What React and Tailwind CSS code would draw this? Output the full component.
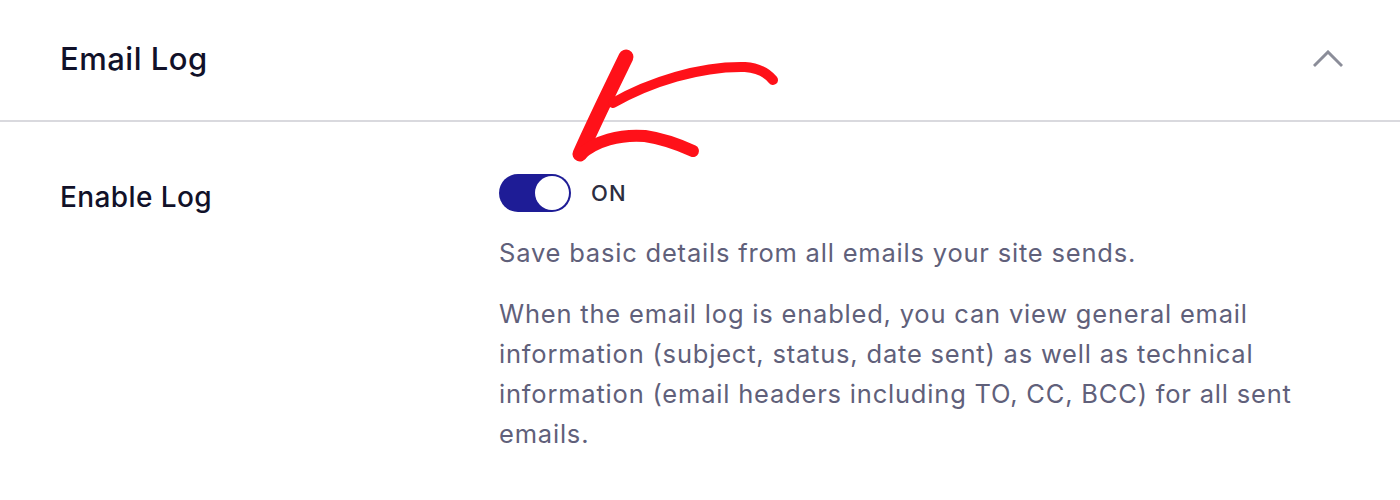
import React from "react";

function ChevronUp() {
  return (
    <svg width="30" height="18" viewBox="0 0 30 18" fill="none">
      <polyline
        points="2,15 15,2 28,15"
        stroke="#8b8d99"
        strokeWidth="3"
        strokeLinecap="square"
        strokeLinejoin="miter"
      />
    </svg>
  );
}

function Toggle() {
  return (
    <div className="flex h-[38px] w-[72px] items-center justify-end rounded-full bg-[#1e1c96] p-[2px]">
      <div className="h-[34px] w-[34px] rounded-full bg-white" />
    </div>
  );
}

function PointerArrow() {
  return (
    <svg
      className="pointer-events-none absolute left-0 top-0"
      width="1400"
      height="500"
      viewBox="0 0 1400 500"
      fill="none"
    >
      <g stroke="#ff1119" strokeLinecap="round" strokeLinejoin="round">
        <path d="M626 57 C612 86 597 116 580 154" strokeWidth="15" />
        <path d="M613 103 C650 82 700 66 745 67 C760 68 768 74 773 80" strokeWidth="10" />
        <path d="M580 155 C595 141 620 134 645 136 C665 139 680 145 693 151" strokeWidth="12" />
      </g>
    </svg>
  );
}

export default function App() {
  return (
    <div
      className="relative h-[500px] w-[1400px] overflow-hidden bg-white"
      style={{ fontFamily: "Inter, 'Noto Sans', sans-serif" }}
    >
      <div className="flex h-[122px] items-center justify-between border-b-2 border-[#d9d9de] pl-[60px] pr-[57px] pb-[2px]">
        <h2 className="text-[31px] font-medium tracking-[0.5px] text-[#111129]">Email Log</h2>
        <ChevronUp />
      </div>

      <div className="grid grid-cols-[439px_1fr] pl-[60px] pt-[52px]">
        <div className="pt-[4px] text-[28px] font-medium leading-[38px] tracking-[0.4px] text-[#111129]">
          Enable Log
        </div>
        <div className="w-[810px]">
          <div className="flex items-center gap-[20px]">
            <Toggle />
            <span className="text-[22px] font-medium tracking-[1.2px] text-[#2c2d40]">ON</span>
          </div>
          <p className="mt-[21px] text-[25.5px] leading-[40px] tracking-[0.8px] text-[#60607a]">
            Save basic details from all emails your site sends.
          </p>
          <p className="mt-[21px] w-[805px] text-[25.5px] leading-[40px] tracking-[0.8px] text-[#60607a]">
            When the email log is enabled, you can view general email information (subject, status, date
            sent) as well as technical information (email headers including TO, CC, BCC) for all sent
            emails.
          </p>
        </div>
      </div>

      <PointerArrow />
    </div>
  );
}
